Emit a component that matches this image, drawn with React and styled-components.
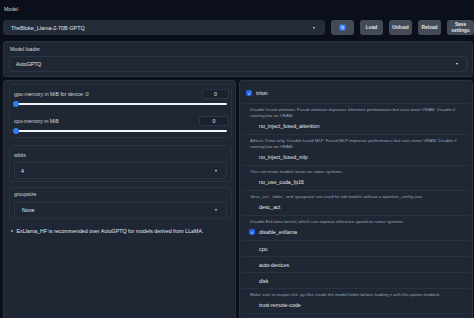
import React from "react";
import styled, { createGlobalStyle } from "styled-components";

const GlobalStyle = createGlobalStyle`
  html, body {
    margin: 0;
    padding: 0;
    background: #0b0f19;
    overflow: hidden;
  }
  body {
    font-family: "Liberation Sans", Arial, sans-serif;
    color: #e5e7eb;
  }
`;

const Page = styled.div`
  width: 474px;
  height: 318px;
  padding: 0 0 0 3px;
  box-sizing: border-box;
  overflow: hidden;
`;

const TopLabel = styled.div`
  font-size: 5.2px;
  color: #d1d5db;
  padding: 6px 0 0 1px;
  height: 20px;
  box-sizing: border-box;
`;

const ModelRow = styled.div`
  display: flex;
  align-items: stretch;
  height: 15px;
  gap: 6px;
  margin-bottom: 6px;
`;

const Select = styled.div`
  flex: ${(p) => (p.grow ? 1 : "none")};
  display: flex;
  align-items: center;
  justify-content: space-between;
  height: ${(p) => p.h || 16}px;
  padding: 0 9px 0 ${(p) => p.pl || 7}px;
  box-sizing: border-box;
  background: ${(p) => p.bg || "#252d3a"};
  border: 1px solid ${(p) => p.border || "#2b3341"};
  border-radius: 3px;
  font-size: ${(p) => p.fs || 5.2}px;
  color: #e5e7eb;
`;

const Caret = styled.span`
  width: 0;
  height: 0;
  border-left: 1.5px solid transparent;
  border-right: 1.5px solid transparent;
  border-top: 2px solid #e5e7eb;
`;

const Button = styled.div`
  width: ${(p) => p.w || 23}px;
  flex: none;
  display: flex;
  align-items: center;
  justify-content: center;
  text-align: center;
  background: #444b58;
  border-radius: 3px;
  font-size: 4.8px;
  line-height: 5.5px;
  font-weight: bold;
  color: #e5e7eb;
`;

const Panel = styled.div`
  background: #1f2735;
  border: 1px solid #2a3240;
  border-radius: 3px;
  box-sizing: border-box;
`;

const LoaderPanel = styled(Panel)`
  width: 470px;
  height: 36px;
  padding: 4px 4px 0 5px;
  margin-bottom: 3px;
`;

const BlockLabel = styled.div`
  font-size: 5.2px;
  color: #d1d5db;
  height: ${(p) => p.h || 9}px;
  line-height: 6px;
  padding-left: ${(p) => p.pl || 0}px;
`;

const Columns = styled.div`
  display: flex;
  gap: 3px;
  align-items: flex-start;
`;

const LeftPanel = styled(Panel)`
  width: 233px;
  height: 250px;
  padding: 3px 3px 0 5px;
`;

const RightPanel = styled(Panel)`
  width: 234px;
  height: 250px;
  padding: 2px 3px 0 3px;
`;

const Block = styled.div`
  border: 1px solid #2a3240;
  border-radius: 3px;
  padding: ${(p) => p.pad || "0"};
  margin-bottom: ${(p) => p.mb || 0}px;
  height: ${(p) => p.h}px;
  box-sizing: border-box;
`;

const SliderHead = styled.div`
  display: flex;
  justify-content: space-between;
  align-items: center;
  height: 11px;
  font-size: 5.2px;
  color: #d1d5db;
  padding-left: 4px;
`;

const NumberBox = styled.div`
  width: ${(p) => p.w || 27}px;
  height: 10px;
  box-sizing: border-box;
  border: 1px solid #2e3645;
  background: #1b222e;
  border-radius: 2px;
  font-size: 5.2px;
  display: flex;
  align-items: center;
  justify-content: center;
  color: #e5e7eb;
`;

const Track = styled.div`
  position: relative;
  height: 2px;
  margin: 4px 2px 0 6px;
  background: #f3f4f6;
  border-radius: 1px;
`;

const Thumb = styled.span`
  position: absolute;
  left: -3px;
  top: -2px;
  width: 6px;
  height: 6px;
  border-radius: 50%;
  background: #2f7ff0;
`;

const Spacer = styled.div`
  height: ${(p) => p.h}px;
`;

const Note = styled.div`
  display: flex;
  align-items: center;
  gap: 4px;
  margin-top: 8px;
  padding-left: 2px;
  font-size: 5.3px;
  color: #e5e7eb;
  &::before {
    content: "";
    width: 1.5px;
    height: 1.5px;
    border-radius: 50%;
    background: #9ca3af;
  }
`;

const Row = styled.div`
  border-bottom: 1px solid #2a3240;
  padding: ${(p) => p.pad || "3px 0 4px 5px"};
  box-sizing: border-box;
  height: ${(p) => p.h}px;
`;

const Desc = styled.div`
  font-size: 4.4px;
  line-height: 6px;
  color: #9ca3af;
  margin-bottom: 3px;
  padding-left: 2px;
`;

const Check = styled.div`
  display: flex;
  align-items: center;
  gap: 4px;
  height: 8px;
  font-size: 5.3px;
  color: #e5e7eb;
  padding-left: 1px;
`;

const Box = styled.span`
  width: 6px;
  height: 6px;
  border-radius: 1.5px;
  flex: none;
  box-sizing: border-box;
  background: ${(p) => (p.on ? "#2563eb" : "#1f2735")};
  border: 1px solid ${(p) => (p.on ? "#2563eb" : "#222a37")};
  display: flex;
  align-items: center;
  justify-content: center;
`;

const CheckItem = ({ label, on }) => (
  <Check>
    <Box on={on ? 1 : 0}>
      {on && (
        <svg width="5" height="5" viewBox="0 0 10 10">
          <path d="M2 5.5 L4.2 7.6 L8 2.6" stroke="#fff" strokeWidth="1.8" fill="none" />
        </svg>
      )}
    </Box>
    {label}
  </Check>
);

const rows = [
  { label: "triton", on: true, h: 21, pad: "6px 0 0 2px" },
  {
    label: "no_inject_fused_attention",
    desc: "Disable fused attention. Fused attention improves inference performance but uses more VRAM. Disable if running low on VRAM.",
    h: 31,
  },
  {
    label: "no_inject_fused_mlp",
    desc: "Affects Triton only. Disable fused MLP. Fused MLP improves performance but uses more VRAM. Disable if running low on VRAM.",
    h: 31,
  },
  { label: "no_use_cuda_fp16", desc: "This can make models faster on some systems.", h: 25 },
  {
    label: "desc_act",
    desc: "'desc_act', 'wbits', and 'groupsize' are used for old models without a quantize_config.json.",
    h: 25,
  },
  {
    label: "disable_exllama",
    on: true,
    desc: "Disable ExLlama kernel, which can improve inference speed on some systems.",
    h: 25,
  },
  { label: "cpu", h: 16, pad: "4px 0 0 5px" },
  { label: "auto-devices", h: 16, pad: "4px 0 0 5px" },
  { label: "disk", h: 16, pad: "4px 0 0 5px" },
  {
    label: "trust-remote-code",
    desc: "Make sure to inspect the .py files inside the model folder before loading it with this option enabled.",
    h: 25,
  },
];

const RefreshIcon = () => (
  <svg width="7" height="7" viewBox="0 0 14 14">
    <rect x="1" y="1" width="12" height="12" rx="2" fill="#3b82f6" />
    <path d="M4.5 7 a2.5 2.5 0 1 1 1 2" stroke="#fff" strokeWidth="1.4" fill="none" />
  </svg>
);

const App = () => (
  <>
    <GlobalStyle />
    <Page>
      <TopLabel>Model</TopLabel>
      <ModelRow>
        <Select grow bg="#252c39" border="#262e3b" fs={5.4} h={15} pl={7}>
          TheBloke_Llama-2-70B-GPTQ
          <Caret />
        </Select>
        <Button w={23}>
          <RefreshIcon />
        </Button>
        <Button>Load</Button>
        <Button>Unload</Button>
        <Button>Reload</Button>
        <Button w={27}>Save settings</Button>
      </ModelRow>
      <LoaderPanel>
        <BlockLabel h={10} pl={1}>Model loader</BlockLabel>
        <Select bg="#1f2735" border="#2d3544" h={16} pl={6}>
          AutoGPTQ
          <Caret />
        </Select>
      </LoaderPanel>
      <Columns>
        <LeftPanel>
          <Block h={54} mb={7} pad="3px 2px 0 0">
            <SliderHead>
              gpu-memory in MiB for device :0
              <NumberBox w={27}>0</NumberBox>
            </SliderHead>
            <Track>
              <Thumb />
            </Track>
            <Spacer h={10} />
            <SliderHead>
              cpu-memory in MiB
              <NumberBox w={30}>0</NumberBox>
            </SliderHead>
            <Track>
              <Thumb />
            </Track>
          </Block>
          <Block h={37} mb={5} pad="6px 4px 0 4px">
            <BlockLabel h={10}>wbits</BlockLabel>
            <Select bg="#1f2735" border="#2d3544" h={17} pl={6}>
              4
              <Caret />
            </Select>
          </Block>
          <Block h={33} pad="3px 4px 0 4px">
            <BlockLabel h={11}>groupsize</BlockLabel>
            <Select bg="#1f2735" border="#2d3544" h={16} pl={7}>
              None
              <Caret />
            </Select>
          </Block>
          <Note>ExLlama_HF is recommended over AutoGPTQ for models derived from LLaMA.</Note>
        </LeftPanel>
        <RightPanel>
          {rows.map((r) => (
            <Row key={r.label} h={r.h} pad={r.pad}>
              {r.desc && <Desc>{r.desc}</Desc>}
              <CheckItem label={r.label} on={r.on} />
            </Row>
          ))}
        </RightPanel>
      </Columns>
    </Page>
  </>
);

export default App;
